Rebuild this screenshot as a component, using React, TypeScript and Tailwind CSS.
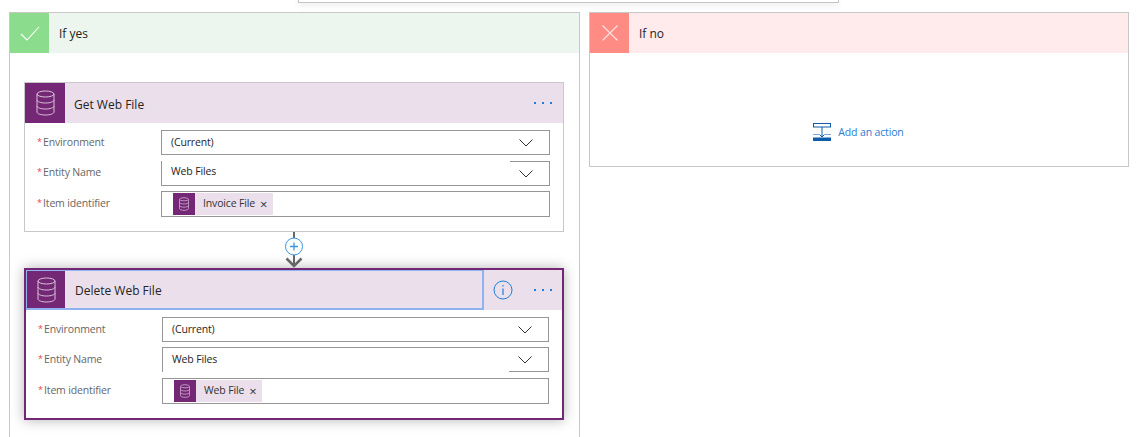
import { ReactNode } from "react";

const DbIcon = ({ w, h, color }: { w: number; h: number; color: string }) => (
    <svg width={w} height={h} viewBox="0 0 19 26" fill="none" stroke={color} strokeWidth={w > 12 ? 1 : 1.6}>
        <ellipse cx="9.5" cy="4" rx="8.5" ry="3" />
        <path d="M1 4v18c0 1.7 3.8 3 8.5 3s8.5-1.3 8.5-3V4" />
        <path d="M1 10c0 1.7 3.8 3 8.5 3s8.5-1.3 8.5-3" />
        <path d="M1 16c0 1.7 3.8 3 8.5 3s8.5-1.3 8.5-3" />
    </svg>
);

const Chevron = () => (
    <svg width="14" height="8" viewBox="0 0 14 8" fill="none" stroke="#323130" strokeWidth="1">
        <path d="M0.5 0.5l6.5 6.5 6.5-6.5" />
    </svg>
);

const Dots = () => (
    <div className="flex gap-[6px] w-[17px]">
        <span className="w-[2px] h-[2px] shrink-0 bg-[#1f7fd8]" />
        <span className="w-[2px] h-[2px] shrink-0 bg-[#1f7fd8]" />
        <span className="w-[2px] h-[2px] shrink-0 bg-[#1f7fd8]" />
    </div>
);

const Label = ({ text, className }: { text: string; className?: string }) => (
    <div className={`w-[124px] shrink-0 flex text-[10.5px] tracking-[-0.15px] text-[#666666] ${className ?? ""}`}>
        <span className="w-[6px] text-[9px] leading-[14px] text-[#e8464b]">*</span>
        <span>{text}</span>
    </div>
);

const SelectField = ({ label, value, gap }: { label: string; value: string; gap: "top" | "bottom" | "none" }) => (
    <div className="flex items-center h-[25px]">
        <Label text={label} className={gap === "top" ? "pb-[2px]" : ""} />
        <div
            className={`flex-1 h-full flex items-center border-[#969696] border-l border-r ${
                gap === "top" ? "border-b" : gap === "bottom" ? "border-t" : "border-y"
            }`}
        >
            <span className={`flex-1 pl-[9px] text-[10.5px] tracking-[-0.15px] text-[#252423] ${gap === "top" ? "pb-[2px]" : ""}`}>
                {value}
            </span>
            <div
                className={`w-[39px] h-full flex items-center justify-center pr-[8px] border-[#969696] ${
                    gap === "top" ? "border-t" : gap === "bottom" ? "border-b" : ""
                }`}
            >
                <Chevron />
            </div>
        </div>
    </div>
);

const TokenField = ({ label, token }: { label: string; token: string }) => (
    <div className="flex items-center h-[26px]">
        <Label text={label} className="pb-[1px]" />
        <div className="flex-1 h-full flex items-center pl-[11px] border border-[#969696]">
            <div className="flex items-center h-[22px] bg-[#eadfeb] pr-[5px]">
                <div className="w-[22px] h-full flex items-center justify-center bg-[#742774]">
                    <DbIcon w={10} h={14} color="#c9a8c9" />
                </div>
                <span className="ml-[8px] pb-[1px] text-[10.5px] tracking-[-0.15px] text-[#333333]">{token}</span>
                <span className="ml-[5px] text-[13px] leading-none text-[#333333]">×</span>
            </div>
        </div>
    </div>
);

const CardBody = ({ children }: { children: ReactNode }) => <div className="flex flex-col pl-[12px] pr-[13px]">{children}</div>;

const Branch = ({ bg, iconBg, title, icon }: { bg: string; iconBg: string; title: string; icon: ReactNode }) => (
    <div className={`flex items-center h-[40px] ${bg}`}>
        <div className={`w-[39px] h-full flex items-center justify-center ${iconBg}`}>{icon}</div>
        <span className="ml-[10px] pt-[1px] text-[12px] text-[#252423]">{title}</span>
    </div>
);

export default function App() {
    return (
        <div className="w-[1141px] h-[437px] overflow-hidden bg-white font-['Open_Sans',sans-serif]">
            <div className="ml-[298px] w-[541px] h-[3px] bg-white border-x border-b border-[#c4c4c4] shadow-[0_2px_6px_rgba(0,0,0,0.12)]" />

            <div className="flex gap-[9px] pl-[9px] mt-[9px] items-start">
                {/* yes branch */}
                <div className="w-[571px] h-[430px] border-x border-t border-[#c8c8c8]">
                    <Branch
                        bg="bg-[#ecf6ee]"
                        iconBg="bg-[#8bdc8d]"
                        title="If yes"
                        icon={
                            <svg width="20" height="15" viewBox="0 0 20 15" fill="none" stroke="white" strokeWidth="1.1">
                                <path d="M1 8l6 6L19 1" />
                            </svg>
                        }
                    />

                    <div className="ml-[14px] mt-[29px] w-[540px] flex flex-col">
                        <div className="h-[150px] border border-[#c8c8c8]">
                            <div className="flex items-center h-[40px] bg-[#eadfeb]">
                                <div className="w-[40px] h-full flex items-center justify-center bg-[#742774]">
                                    <DbIcon w={19} h={26} color="#d9c3d9" />
                                </div>
                                <span className="flex-1 ml-[9px] pt-[3px] text-[12px] text-[#252423]">Get Web File</span>
                                <div className="mr-[12px]">
                                    <Dots />
                                </div>
                            </div>
                            <div className="pt-[7px]">
                                <CardBody>
                                    <SelectField label="Environment" value="(Current)" gap="none" />
                                    <div className="h-[6px]" />
                                    <SelectField label="Entity Name" value="Web Files" gap="top" />
                                    <div className="h-[5px]" />
                                    <TokenField label="Item identifier" token="Invoice File" />
                                </CardBody>
                            </div>
                        </div>

                        {/* connector */}
                        <div className="relative z-10 h-[36px] flex justify-center">
                            <svg width="20" height="36" viewBox="0 0 20 36" fill="none">
                                <path d="M10 0v34" stroke="#666666" strokeWidth="2" />
                                <path d="M2.5 26.5l7.5 7.5 7.5-7.5" stroke="#666666" strokeWidth="2.5" />
                                <circle cx="10" cy="14.5" r="8.5" fill="white" stroke="#3b97e0" strokeWidth="1" />
                                <path d="M6 14.5h8M10 10.5v8" stroke="#3b97e0" strokeWidth="1.3" />
                            </svg>
                        </div>

                        <div className="h-[152px] border-2 border-[#742774] shadow-[0_0_12px_rgba(0,0,0,0.3)] bg-white">
                            <div className="flex items-center h-[40px] bg-[#eadfeb]">
                                <div className="w-[458px] h-full flex items-center border border-r-2 border-b-2 border-[#8fb3f0]">
                                    <div className="w-[38px] h-full flex items-center justify-center bg-[#742774]">
                                        <DbIcon w={19} h={26} color="#d9c3d9" />
                                    </div>
                                    <span className="ml-[10px] pt-[2px] text-[12px] text-[#252423]">Delete Web File</span>
                                </div>
                                <div className="flex-1 flex items-center justify-between pl-[9px] pr-[11px]">
                                    <svg width="20" height="20" viewBox="0 0 20 20" fill="none" stroke="#1f7fd8">
                                        <circle cx="10" cy="10" r="9" />
                                        <path d="M10 8.5V15" strokeWidth="1.2" />
                                        <path d="M10 5v1.5" strokeWidth="1.2" />
                                    </svg>
                                    <Dots />
                                </div>
                            </div>
                            <div className="pt-[7px]">
                                <CardBody>
                                    <SelectField label="Environment" value="(Current)" gap="none" />
                                    <div className="h-[5px]" />
                                    <SelectField label="Entity Name" value="Web Files" gap="bottom" />
                                    <div className="h-[6px]" />
                                    <TokenField label="Item identifier" token="Web File" />
                                </CardBody>
                            </div>
                        </div>
                    </div>
                </div>

                {/* no branch */}
                <div className="w-[540px] h-[155px] border border-[#c8c8c8]">
                    <Branch
                        bg="bg-[#ffebeb]"
                        iconBg="bg-[#ff8b85]"
                        title="If no"
                        icon={
                            <svg width="16" height="16" viewBox="0 0 16 16" fill="none" stroke="#ffe4e2" strokeWidth="1.1">
                                <path d="M0.5 0.5l15 15M15.5 0.5l-15 15" />
                            </svg>
                        }
                    />
                    <div className="flex items-start justify-center gap-[7px] pt-[70px] pr-[1px]">
                        <svg width="18" height="18" viewBox="0 0 18 18" fill="none" className="shrink-0">
                            <rect x="0.5" y="0.5" width="17" height="3.5" stroke="#0f5ca8" />
                            <path d="M9 4v10M6.5 11.5L9 14l2.5-2.5" stroke="#0f5ca8" />
                            <path d="M0 11.5h6M12 11.5h6" stroke="#7da7d3" />
                            <rect x="0" y="14.5" width="18" height="3.5" fill="#0f5ca8" />
                        </svg>
                        <span className="text-[10.5px] tracking-[-0.15px] leading-[18px] text-[#2b7cd3]">Add an action</span>
                    </div>
                </div>
            </div>
        </div>
    );
}
